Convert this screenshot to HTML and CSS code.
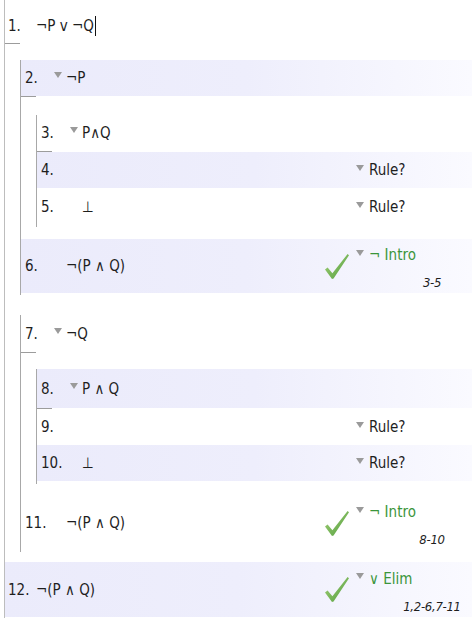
FILE: index.html
```html
<!DOCTYPE html>
<html>
<head>
<meta charset="utf-8">
<link rel="stylesheet" href="styles.css">
</head>
<body>
<svg width="0" height="0" class="defs">
  <defs>
    <linearGradient id="ckg" x1="0" y1="0" x2="1" y2="1">
      <stop offset="0" stop-color="#a7d27a"/>
      <stop offset="1" stop-color="#4f9c3c"/>
    </linearGradient>
  </defs>
</svg>
<div class="proof">
  <div class="row r1">
    <span class="num n0">1.</span>
    <span class="f">¬P v ¬Q<span class="cursor"></span></span>
  </div>
  <div class="hyp"></div>

  <div class="sub subA">
    <div class="row band r2">
      <span class="num n1">2.</span><span class="tri"><svg width="8" height="6" viewBox="0 0 8 6"><path d="M0 0H8L4 6Z" fill="#9a9a9a"/></svg></span>
      <span class="f">¬P</span>
    </div>
    <div class="hyp"></div>

    <div class="sub subB">
      <div class="row r3">
        <span class="num n1">3.</span><span class="tri"><svg width="8" height="6" viewBox="0 0 8 6"><path d="M0 0H8L4 6Z" fill="#9a9a9a"/></svg></span>
        <span class="f">P∧Q</span>
      </div>
      <div class="hyp"></div>
      <div class="row band r4">
        <span class="num n1">4.</span><span class="tri"></span>
        <span class="f"></span>
        <div class="just"><div class="rule"><svg class="jt" width="8" height="6" viewBox="0 0 8 6"><path d="M0 0H8L4 6Z" fill="#9a9a9a"/></svg><span>Rule?</span></div></div>
      </div>
      <div class="row r5">
        <span class="num n1">5.</span><span class="tri"></span>
        <span class="f">⊥</span>
        <div class="just"><div class="rule"><svg class="jt" width="8" height="6" viewBox="0 0 8 6"><path d="M0 0H8L4 6Z" fill="#9a9a9a"/></svg><span>Rule?</span></div></div>
      </div>
    </div>

    <div class="row band tall r6">
      <span class="num n1">6.</span><span class="tri"></span>
      <span class="f">¬(P ∧ Q)</span>
      <svg class="check" width="24" height="25" viewBox="0 0 24 25"><path d="M0 15.5 L2.6 13.6 L7.4 19.2 L22.6 0 L24 1.2 L8.6 24.6 L7 25 Z" fill="url(#ckg)"/></svg>
      <div class="just">
        <div class="rule ok"><svg class="jt" width="8" height="6" viewBox="0 0 8 6"><path d="M0 0H8L4 6Z" fill="#9a9a9a"/></svg><span>¬ Intro</span></div>
        <div class="cite">3-5</div>
      </div>
    </div>
  </div>

  <div class="sub subC">
    <div class="row r7">
      <span class="num n1">7.</span><span class="tri"><svg width="8" height="6" viewBox="0 0 8 6"><path d="M0 0H8L4 6Z" fill="#9a9a9a"/></svg></span>
      <span class="f">¬Q</span>
    </div>
    <div class="hyp"></div>

    <div class="sub subD">
      <div class="row band r8">
        <span class="num n1">8.</span><span class="tri"><svg width="8" height="6" viewBox="0 0 8 6"><path d="M0 0H8L4 6Z" fill="#9a9a9a"/></svg></span>
        <span class="f">P ∧ Q</span>
      </div>
      <div class="hyp"></div>
      <div class="row r9">
        <span class="num n1">9.</span><span class="tri"></span>
        <span class="f"></span>
        <div class="just"><div class="rule"><svg class="jt" width="8" height="6" viewBox="0 0 8 6"><path d="M0 0H8L4 6Z" fill="#9a9a9a"/></svg><span>Rule?</span></div></div>
      </div>
      <div class="row band r10">
        <span class="num n1">10.</span><span class="tri"></span>
        <span class="f">⊥</span>
        <div class="just"><div class="rule"><svg class="jt" width="8" height="6" viewBox="0 0 8 6"><path d="M0 0H8L4 6Z" fill="#9a9a9a"/></svg><span>Rule?</span></div></div>
      </div>
    </div>

    <div class="row tall r11">
      <span class="num n1">11.</span><span class="tri"></span>
      <span class="f">¬(P ∧ Q)</span>
      <svg class="check" width="24" height="25" viewBox="0 0 24 25"><path d="M0 15.5 L2.6 13.6 L7.4 19.2 L22.6 0 L24 1.2 L8.6 24.6 L7 25 Z" fill="url(#ckg)"/></svg>
      <div class="just">
        <div class="rule ok"><svg class="jt" width="8" height="6" viewBox="0 0 8 6"><path d="M0 0H8L4 6Z" fill="#9a9a9a"/></svg><span>¬ Intro</span></div>
        <div class="cite">8-10</div>
      </div>
    </div>
  </div>

  <div class="row band tall r12">
    <span class="num n0">12.</span>
    <span class="f">¬(P ∧ Q)</span>
    <svg class="check" width="24" height="25" viewBox="0 0 24 25"><path d="M0 15.5 L2.6 13.6 L7.4 19.2 L22.6 0 L24 1.2 L8.6 24.6 L7 25 Z" fill="url(#ckg)"/></svg>
    <div class="just">
      <div class="rule ok"><svg class="jt" width="8" height="6" viewBox="0 0 8 6"><path d="M0 0H8L4 6Z" fill="#9a9a9a"/></svg><span>∨ Elim</span></div>
      <div class="cite">1,2-6,7-11</div>
    </div>
  </div>
</div>
</body>
</html>
```

FILE: styles.css
```css
html, body {
  margin: 0;
  background: #ffffff;
}
body {
  font-family: "DejaVu Sans Condensed", "Liberation Sans", sans-serif;
  font-size: 15px;
  color: #1e1e1e;
}
.defs {
  position: absolute;
}
.proof {
  margin-left: 4px;
  width: 467px;
  border-left: 1px solid #bdbdbd;
  padding-top: 8px;
  padding-bottom: 1px;
}
.sub {
  margin-left: 15px;
  border-left: 1px solid #a8a8a8;
}
.row {
  display: flex;
  align-items: center;
  height: 36px;
}
.band {
  background: linear-gradient(to right, #ebebfb 0%, #eeeefc 50%, #fafaff 100%);
}
.hyp {
  width: 15px;
  height: 1px;
  background: #9c9c9c;
}
.num {
  flex: none;
  box-sizing: border-box;
}
.n0 {
  width: 31px;
  padding-left: 3px;
}
.n1 {
  width: 33px;
  padding-left: 4px;
}
.tri {
  flex: none;
  width: 12px;
  align-self: center;
  display: flex;
  margin-top: -6px;
}
.f {
  flex: 1;
  white-space: pre;
  display: flex;
  align-items: center;
}
.cursor {
  display: inline-block;
  width: 1px;
  height: 20px;
  background: #111;
  margin-left: 1px;
}
.check {
  flex: none;
  margin-right: 7px;
}
.just {
  flex: none;
  width: 116px;
  display: flex;
  flex-direction: column;
}
.rule {
  display: flex;
  align-items: center;
  height: 20px;
}
.jt {
  margin-right: 5px;
  margin-top: -5px;
}
.ok span {
  color: #3b953b;
}
.cite {
  width: 90px;
  margin-left: 31px;
  margin-top: 8px;
  height: 20px;
  line-height: 20px;
  text-align: center;
  white-space: nowrap;
  font-style: italic;
  font-size: 13px;
  letter-spacing: -0.3px;
  color: #1e1e1e;
}
.tall {
  height: 54px;
  align-items: center;
}
.tall .just {
  padding-top: 6px;
  height: 54px;
  box-sizing: border-box;
}

/* vertical rhythm */
.r1 { height: 35px; }
.subA { margin-top: 16px; padding-bottom: 2px; }
.subB { margin-top: 18px; padding-bottom: 1px; }
.r5 { height: 38px; }
.r6 { margin-top: 12px; }
.subC { margin-top: 20px; padding-bottom: 2px; }
.r7 { height: 37px; }
.subD { margin-top: 16px; padding-bottom: 3px; }
.r8 { height: 39px; }
.r11 { margin-top: 12px; }
.r12 { margin-top: 10px; height: 55px; }
```
